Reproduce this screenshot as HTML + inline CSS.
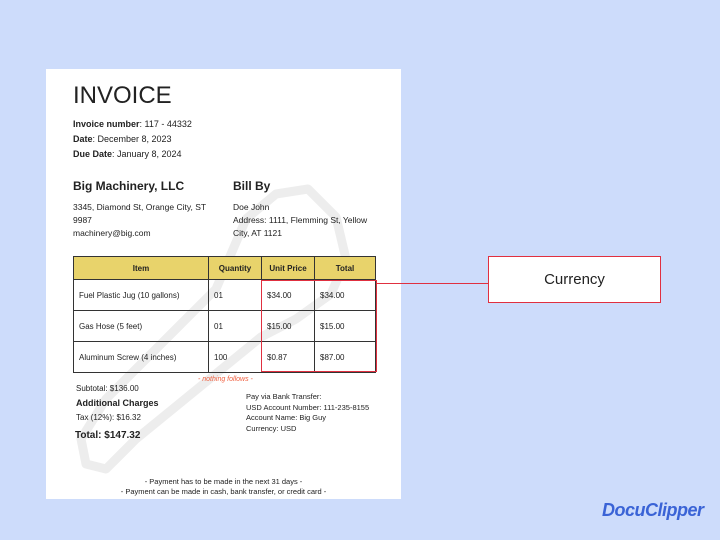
<!DOCTYPE html>
<html><head><style>
body{margin:0;width:720px;height:540px;background:#cddcfb;position:relative;overflow:hidden;font-family:"Liberation Sans",sans-serif;color:#222}
.pg{position:absolute;left:46px;top:69px;width:355px;height:430px;background:#fff}
.a{position:absolute;white-space:nowrap}
table{position:absolute;left:73px;top:256px;width:302px;table-layout:fixed;border-collapse:collapse;font-size:8px}
td{border:1px solid #333;height:30px;padding:0 0 0 5px}
th{border:1px solid #333;background:#e8d36b;height:22px;font-size:8px;font-weight:bold;padding:0}
</style></head><body>
<div class="pg"></div>
<svg style="position:absolute;left:46px;top:69px" width="355" height="430">
<g fill="none" stroke="#ededed" stroke-width="9" stroke-linejoin="round">
<path d="M262 120 L290 148 L300 190 L285 225 L250 250 L215 268 L90 370 L60 400 L40 395 L35 370 L60 330 L170 220 L185 185 L200 150 L230 125 Z"/>
</g></svg>
<div class="a" style="left:73px;top:82px;font-size:24px">INVOICE</div>
<div class="a" style="left:73px;top:117px;font-size:9px;line-height:15px"><b>Invoice number</b>: 117 - 44332<br><b>Date</b>: December 8, 2023<br><b>Due Date</b>: January 8, 2024</div>
<div class="a" style="left:73px;top:179px;font-size:12px;font-weight:bold">Big Machinery, LLC</div>
<div class="a" style="left:233px;top:179px;font-size:12px;font-weight:bold">Bill By</div>
<div class="a" style="left:73px;top:201px;font-size:8.5px;line-height:13px">3345, Diamond St, Orange City, ST<br>9987<br>machinery@big.com</div>
<div class="a" style="left:233px;top:201px;font-size:8.5px;line-height:13px">Doe John<br>Address: 1111, Flemming St, Yellow<br>City, AT 1121</div>
<table>
<colgroup><col style="width:135px"><col style="width:53px"><col style="width:53px"><col style="width:61px"></colgroup>
<tr><th>Item</th><th>Quantity</th><th>Unit Price</th><th>Total</th></tr>
<tr><td>Fuel Plastic Jug (10 gallons)</td><td>01</td><td>$34.00</td><td>$34.00</td></tr>
<tr><td>Gas Hose (5 feet)</td><td>01</td><td>$15.00</td><td>$15.00</td></tr>
<tr><td>Aluminum Screw (4 inches)</td><td>100</td><td>$0.87</td><td>$87.00</td></tr>
</table>
<div class="a" style="left:261px;top:280px;width:114px;height:90px;border:1px solid #e03040"></div>
<div class="a" style="left:376px;top:283px;width:112px;height:1px;background:#e03040"></div>
<div class="a" style="left:488px;top:256px;width:171px;height:45px;border:1px solid #e03040;background:#fff;font-size:15px;text-align:center;line-height:45px">Currency</div>
<div class="a" style="left:198px;top:376px;font-size:7px;color:#f06040;font-style:italic">- nothing follows -</div>
<div class="a" style="left:76px;top:384px;font-size:8px">Subtotal: $136.00</div>
<div class="a" style="left:76px;top:398px;font-size:9px;font-weight:bold">Additional Charges</div>
<div class="a" style="left:76px;top:413px;font-size:8px">Tax (12%): $16.32</div>
<div class="a" style="left:75px;top:430px;font-size:10px;font-weight:bold">Total: $147.32</div>
<div class="a" style="left:246px;top:392px;font-size:7.5px;line-height:10.5px">Pay via Bank Transfer:<br>USD Account Number: 111-235-8155<br>Account Name: Big Guy<br>Currency: USD</div>
<div class="a" style="left:46px;width:355px;top:477px;font-size:7.5px;line-height:10px;text-align:center">- Payment has to be made in the next 31 days -<br>- Payment can be made in cash, bank transfer, or credit card -</div>
<div class="a" style="left:602px;top:500px;font-size:18px;font-weight:bold;font-style:italic;color:#3a63d6;font-family:'Liberation Sans',sans-serif;letter-spacing:-0.5px">DocuClipper</div>
</body></html>
